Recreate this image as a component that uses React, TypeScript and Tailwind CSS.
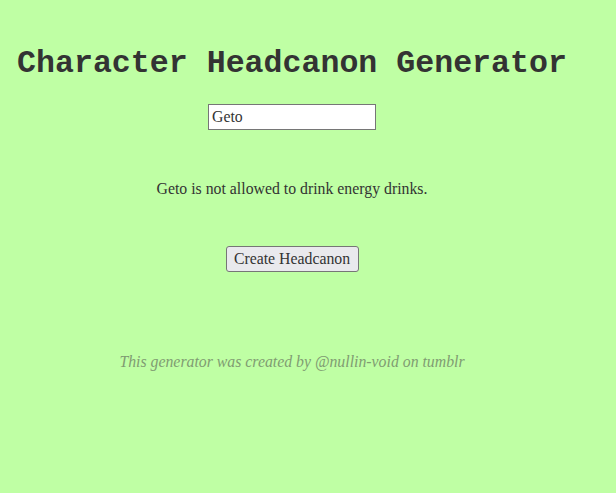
import { useState } from "react";

export default function App() {
  const [name, setName] = useState("Geto");

  return (
    <div className="min-h-[493px] bg-[#bfffa4] text-[#333333] [font-family:'Liberation_Serif',serif]">
      <div className="flex w-[584px] flex-col items-center">
        <h1 className="mt-[45px] text-[31.6px] font-bold leading-[37px] [font-family:'Liberation_Mono',monospace]">
          Character Headcanon Generator
        </h1>
        <input
          type="text"
          value={name}
          onChange={(e) => setName(e.target.value)}
          className="mt-[22px] h-[26px] w-[168px] border border-[#767676] bg-white px-[3px] text-[15.8px] text-[#333333] outline-none"
        />
        <p className="mt-[50px] text-[15.8px] leading-[18px]">
          {name} is not allowed to drink energy drinks.
        </p>
        <button className="mt-[48px] h-[26px] w-[133px] rounded-[3px] border border-[#767676] bg-[#e9e9ed] text-[15.8px] text-[#333333]">
          Create Headcanon
        </button>
        <p className="mt-[81px] text-[15.8px] italic leading-[18px] text-[#7f9c72]">
          This generator was created by @nullin-void on tumblr
        </p>
      </div>
    </div>
  );
}
